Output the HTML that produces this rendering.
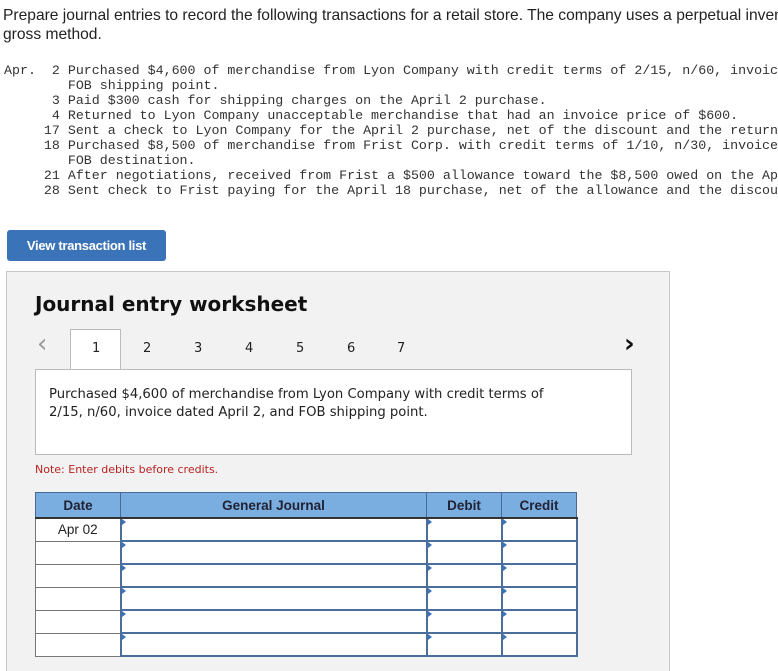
<!DOCTYPE html>
<html><head><style>
html,body{margin:0;width:778px;height:671px;overflow:hidden}
body{background:#fff;font-family:"Liberation Sans",Arial,sans-serif;position:relative}
.a{position:absolute;white-space:nowrap}
.intro{left:3px;top:6px;font-size:15.6px;color:#222;line-height:19px}
pre{position:absolute;left:4px;top:63px;margin:0;font-family:"Liberation Mono",monospace;font-size:13.3px;line-height:15px;color:#333}
.btn{left:7px;top:230px;width:159px;height:31px;background:#3b73b9;border-radius:3px;color:#fff;font-weight:bold;font-size:13px;line-height:31px;text-align:center;letter-spacing:-0.3px}
.panel{left:6px;top:271px;width:662px;height:410px;background:#f2f2f2;border:1px solid #c8c8c8}
h2{position:absolute;left:35px;top:292px;margin:0;font-size:20px;font-family:"DejaVu Sans",sans-serif;font-weight:bold;color:#111}
.tab{font-family:"DejaVu Sans",sans-serif;font-size:13px;color:#222;top:341px}
.tab1{left:70px;top:329px;width:49px;height:42px;background:#fff;border:1px solid #bbb;border-bottom:none}
.box{left:35px;top:369px;width:595px;height:84px;background:#fff;border:1px solid #bbb}
.desc{left:49px;top:386px;font-family:"DejaVu Sans",sans-serif;font-size:13.2px;line-height:18px;color:#222}
.note{left:35px;top:463px;font-family:"DejaVu Sans",sans-serif;font-size:11px;color:#b22}
table{position:absolute;left:35px;top:492px;border-collapse:collapse;font-size:13.5px}
th{background:#7aaee0;border:1px solid #4a6a95;height:24px;font-weight:bold;color:#223;padding:0;border-bottom:2px solid #333}
td{height:21px;padding:0;background:#fff;position:relative}
td.d{border:1px solid #777;text-align:center;color:#222}
td.i{border:2px solid #4c6e9c}
td.i:before{content:"";position:absolute;left:0;top:0;border-left:4px solid #3b73b9;border-top:3px solid transparent;border-bottom:3px solid transparent}
</style></head><body>
<div class="a intro">Prepare journal entries to record the following transactions for a retail store. The company uses a perpetual inventory system and the<br>gross method.</div>
<pre>Apr.  2 Purchased $4,600 of merchandise from Lyon Company with credit terms of 2/15, n/60, invoice dated April 2, and
        FOB shipping point.
      3 Paid $300 cash for shipping charges on the April 2 purchase.
      4 Returned to Lyon Company unacceptable merchandise that had an invoice price of $600.
     17 Sent a check to Lyon Company for the April 2 purchase, net of the discount and the returned merchandise.
     18 Purchased $8,500 of merchandise from Frist Corp. with credit terms of 1/10, n/30, invoice dated April 18, and
        FOB destination.
     21 After negotiations, received from Frist a $500 allowance toward the $8,500 owed on the April 18 purchase.
     28 Sent check to Frist paying for the April 18 purchase, net of the allowance and the discount.</pre>
<div class="a btn">View transaction list</div>
<div class="a panel"></div>
<h2>Journal entry worksheet</h2>
<div class="a" style="left:37px;top:329px;font-size:26px;color:#999;font-family:'DejaVu Sans'">&#8249;</div>
<div class="a" style="left:624px;top:329px;font-size:26px;color:#111;font-weight:bold;font-family:'DejaVu Sans'">&#8250;</div>
<div class="a tab1"></div>
<div class="a box"></div>
<div class="a tab" style="left:92px">1</div>
<div class="a tab" style="left:143px">2</div>
<div class="a tab" style="left:194px">3</div>
<div class="a tab" style="left:245px">4</div>
<div class="a tab" style="left:296px">5</div>
<div class="a tab" style="left:347px">6</div>
<div class="a tab" style="left:397px">7</div>
<div class="a desc">Purchased $4,600 of merchandise from Lyon Company with credit terms of<br>2/15, n/60, invoice dated April 2, and FOB shipping point.</div>
<div class="a note">Note: Enter debits before credits.</div>
<table>
<tr><th style="width:84px">Date</th><th style="width:305px">General Journal</th><th style="width:74px">Debit</th><th style="width:74px">Credit</th></tr>
<tr><td class="d">Apr 02</td><td class="i"></td><td class="i"></td><td class="i"></td></tr>
<tr><td class="d"></td><td class="i"></td><td class="i"></td><td class="i"></td></tr>
<tr><td class="d"></td><td class="i"></td><td class="i"></td><td class="i"></td></tr>
<tr><td class="d"></td><td class="i"></td><td class="i"></td><td class="i"></td></tr>
<tr><td class="d"></td><td class="i"></td><td class="i"></td><td class="i"></td></tr>
<tr><td class="d"></td><td class="i"></td><td class="i"></td><td class="i"></td></tr>
</table>
</body></html>
